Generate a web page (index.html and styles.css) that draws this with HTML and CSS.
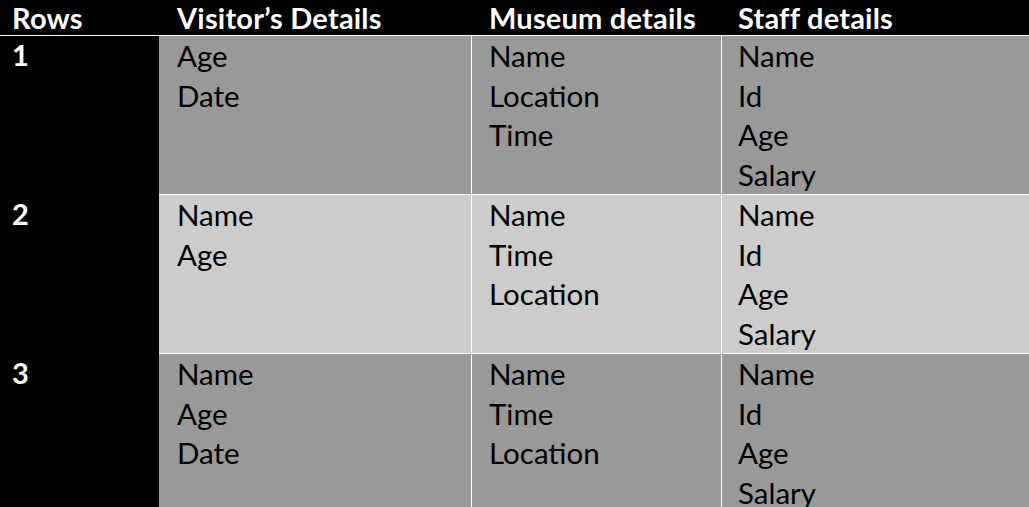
FILE: index.html
```html
<!DOCTYPE html>
<html>
<head>
<meta charset="utf-8">
<link rel="stylesheet" href="styles.css">
</head>
<body>
<div class="table">
  <div class="head">
    <div class="hcell c1">Rows</div>
    <div class="hcell c2">Visitor’s Details</div>
    <div class="hcell c3">Museum details</div>
    <div class="hcell c4">Staff details</div>
  </div>
  <div class="row dark">
    <div class="num c1">1</div>
    <div class="cell c2"><span>Age</span><span>Date</span></div>
    <div class="cell c3"><span>Name</span><span>Location</span><span>Time</span></div>
    <div class="cell c4"><span>Name</span><span>Id</span><span>Age</span><span>Salary</span></div>
  </div>
  <div class="row light">
    <div class="num c1">2</div>
    <div class="cell c2"><span>Name</span><span>Age</span></div>
    <div class="cell c3"><span>Name</span><span>Time</span><span>Location</span></div>
    <div class="cell c4"><span>Name</span><span>Id</span><span>Age</span><span>Salary</span></div>
  </div>
  <div class="row dark">
    <div class="num c1">3</div>
    <div class="cell c2"><span>Name</span><span>Age</span><span>Date</span></div>
    <div class="cell c3"><span>Name</span><span>Time</span><span>Location</span></div>
    <div class="cell c4"><span>Name</span><span>Id</span><span>Age</span><span>Salary</span></div>
  </div>
</div>
</body>
</html>
```
FILE: styles.css
```css
html, body {
  margin: 0;
  padding: 0;
  background: #000;
}
.table {
  width: 1029px;
  height: 507px;
  overflow: hidden;
  font-family: "Lato", "Open Sans", sans-serif;
}
.head {
  display: flex;
  height: 35px;
  background: #000;
  border-bottom: 1px solid #fff;
}
.hcell {
  color: #fff;
  font-weight: bold;
  font-size: 29px;
  letter-spacing: 0.2px;
  line-height: 35px;
  white-space: nowrap;
}
.c1 { width: 159px; padding-left: 12px; box-sizing: border-box; flex: none; }
.c2 { width: 313px; padding-left: 18px; box-sizing: border-box; flex: none; }
.c3 { width: 250px; padding-left: 17px; box-sizing: border-box; flex: none; }
.c4 { flex: 1; padding-left: 16px; box-sizing: border-box; }
.row {
  display: flex;
  height: 159px;
}
.num {
  background: #000;
  color: #fff;
  font-weight: bold;
  font-size: 29px;
  line-height: 38px;
}
.cell {
  display: flex;
  flex-direction: column;
  border-bottom: 1px solid #fff;
  font-size: 29.5px;
  line-height: 39.5px;
  color: #000;
  white-space: nowrap;
}
.cell.c2, .cell.c3 { border-right: 1px solid #fff; }
.dark .cell { background: #999999; }
.light .cell { background: #cccccc; }
```
